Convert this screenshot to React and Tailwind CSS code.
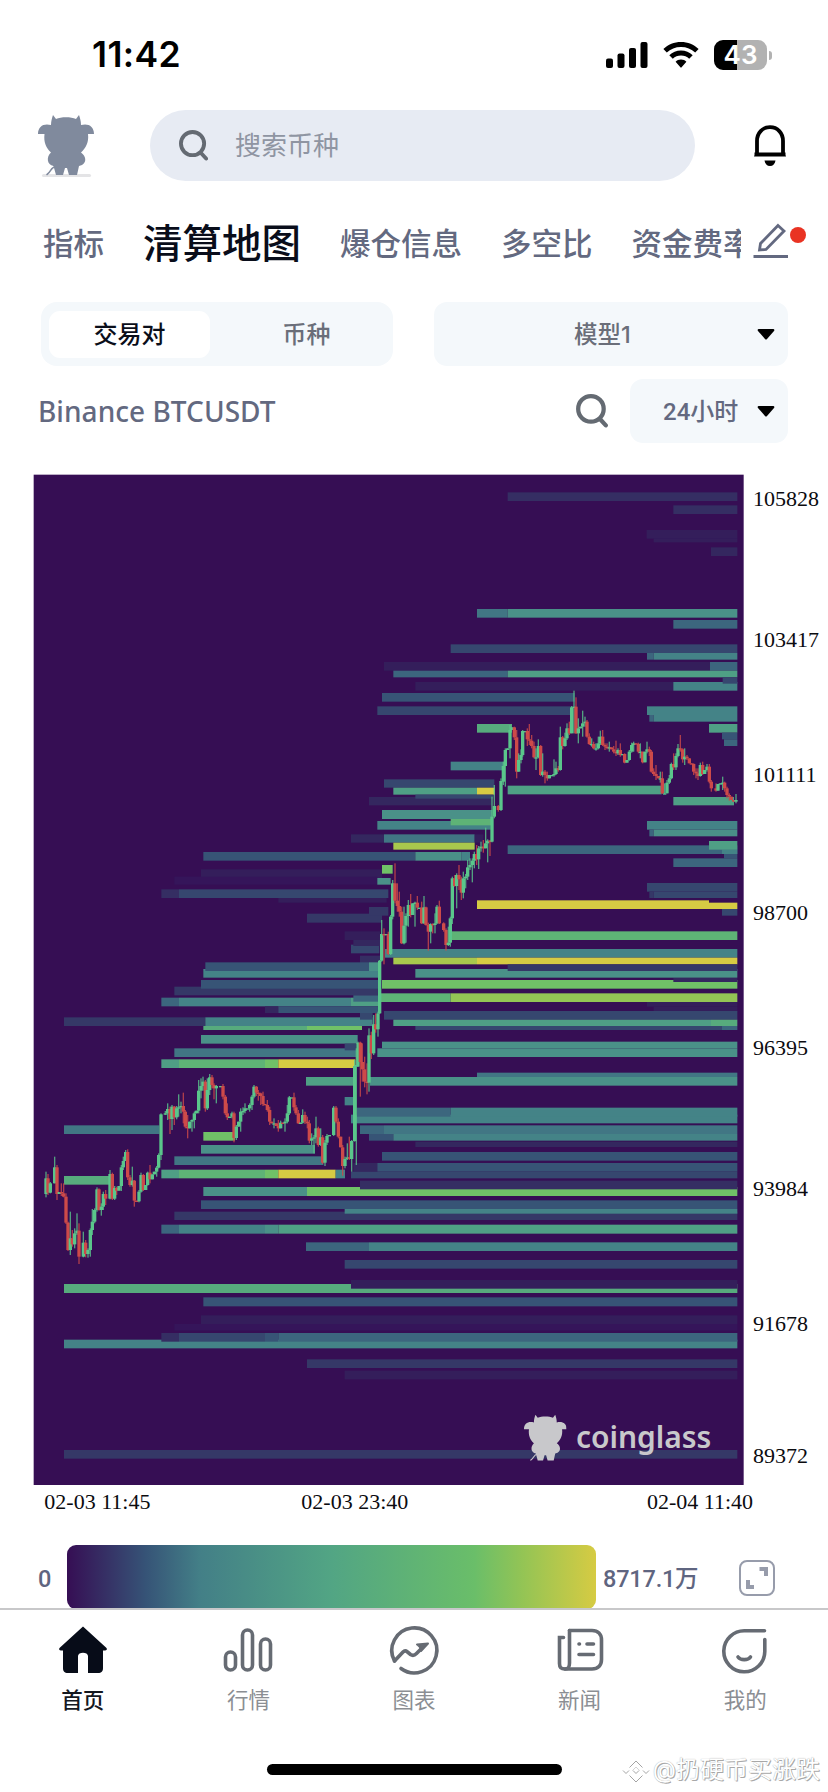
const CJK = "font-['Inter','Noto_Sans_CJK_SC',sans-serif]";

const palette = {
    a: '#35155a',
    b: '#341e5b',
    c: '#34275f',
    d: '#352e63',
    e: '#353867',
    f: '#36476f',
    g: '#375476',
    h: '#3c667e',
    i: '#417684',
    j: '#448387',
    k: '#4a9188',
    l: '#4f9f85',
    m: '#57ab7d',
    n: '#5eb376',
    o: '#70c167',
    p: '#93c455',
    q: '#a8c84d',
    r: '#d6cb43',
};

const END = 2212;

// [top, bottom, [start, level, start, level, ..., end]]
const levels = [
    [1477, 1503, [1523, 'd', END]],
    [1516, 1542, [2020, 'd', END]],
    [1590, 1616, [1940, 'b', END]],
    [1615, 1627, [1961, 'b', END]],
    [1642, 1668, [2133, 'c', END]],
    [1827, 1853, [1431, 'i', 1523, 'k', END]],
    [1860, 1886, [2020, 'h', END]],
    [1933, 1959, [1352, 'f', END]],
    [1959, 1979, [1941, 'h', 1961, 'j', END]],
    [1986, 2012, [1152, 'b', 2130, 'h', END]],
    [2012, 2032, [1180, 'h', 1523, 'l', END]],
    [2046, 2072, [1246, 'b', 2020, 'j', END]],
    [2032, 2051, [2168, 'f', END]],
    [2079, 2105, [1146, 'g', 1724]],
    [2119, 2145, [1132, 'f', 1715]],
    [2119, 2145, [1941, 'j', END]],
    [2145, 2165, [1948, 'h', 1961, 'j', END]],
    [2172, 2198, [1431, 'm', 1536]],
    [2172, 2198, [2127, 'l', END]],
    [2198, 2218, [2166, 'g', END]],
    [2218, 2238, [2172, 'h', END]],
    [2285, 2311, [1352, 'j', 1511]],
    [2338, 2363, [1152, 'f', 1483]],
    [2363, 2384, [1180, 'l', 1431, 'r', 1484]],
    [2357, 2383, [1523, 'l', 1985]],
    [2391, 2416, [1107, 'c', 1478]],
    [2384, 2396, [1246, 'f', 1480]],
    [2391, 2416, [2020, 'l', 2202]],
    [2430, 2457, [1146, 'k', 1478]],
    [2463, 2489, [1132, 'j', 1472]],
    [2457, 2476, [1352, 'n', 1475]],
    [2463, 2489, [1941, 'j', END]],
    [2489, 2509, [1948, 'h', 1961, 'k', END]],
    [2503, 2528, [1053, 'c', 1152, 'i', 1424, 'b', 1450]],
    [2528, 2549, [1180, 'q', 1424]],
    [2536, 2562, [1523, 'h', END]],
    [2549, 2562, [2166, 'j', END]],
    [2523, 2549, [2127, 'l', END]],
    [2562, 2575, [2172, 'g', END]],
    [2556, 2582, [610, 'g', 1246, 'k', 1385, 'j', 1410]],
    [2575, 2601, [2020, 'h', END]],
    [2595, 2621, [1146, 'o', 1178]],
    [2608, 2634, [603, 'b', 1146]],
    [2630, 2654, [523, 'a', 1132]],
    [2634, 2654, [1132, 'k', 1172]],
    [2649, 2675, [1941, 'f', END]],
    [2675, 2694, [1948, 'e', 1961, 'f', END]],
    [2668, 2694, [484, 'd', 537, 'f', 1165]],
    [2694, 2708, [835, 'b', 1160]],
    [2701, 2727, [1431, 'r', 2127]],
    [2708, 2727, [2127, 'r', END]],
    [2727, 2747, [2166, 'f', END]],
    [2741, 2768, [921, 'e', 1146]],
    [2721, 2747, [1107, 'e', 1165]],
    [2794, 2820, [1034, 'b', 1140]],
    [2794, 2820, [1350, 'n', END]],
    [2834, 2860, [1053, 'f', 1138]],
    [2820, 2838, [1060, 'c', 1140]],
    [2847, 2873, [1155, 'j', END]],
    [2867, 2893, [1080, 'd', 1140]],
    [2873, 2893, [1180, 'q', 1431, 'r', END]],
    [2907, 2933, [610, 'j', 1135]],
    [2887, 2913, [616, 'g', 1107, 'k', 1138]],
    [2907, 2933, [1246, 'k', END]],
    [2893, 2913, [1523, 'e', END]],
    [2960, 2986, [523, 'e', 1135]],
    [2940, 2966, [603, 'g', 1135]],
    [2940, 2966, [1146, 'o', END]],
    [2934, 2946, [2020, 'c', END]],
    [2980, 3006, [1140, 'n', 1352, 'p', END]],
    [2993, 3019, [484, 'h', 537, 'j', 1053, 'l', 1135]],
    [2986, 3005, [1060, 'h', 1135]],
    [3006, 3020, [1941, 'b', END]],
    [3020, 3037, [1961, 'b', END]],
    [3019, 3039, [795, 'c', 835, 'g', 1135]],
    [3033, 3059, [1152, 'f', END]],
    [3052, 3078, [192, 'e', 616, 'j', 1118]],
    [3039, 3059, [1080, 'f', 1118]],
    [3059, 3078, [1180, 'l', 2133, 'm', END]],
    [3078, 3090, [610, 'm', 921, 'o', 1086]],
    [3078, 3090, [1246, 'f', 2166, 'h', END]],
    [3105, 3131, [603, 'k', 1073]],
    [3125, 3145, [1146, 'k', END]],
    [3145, 3171, [1132, 'k', END]],
    [3145, 3171, [523, 'i', 1068]],
    [3131, 3151, [1034, 'f', 1068]],
    [3178, 3204, [484, 'l', 537, 'n', 795, 'o', 835, 'r', 1066]],
    [3218, 3231, [1431, 'i', END]],
    [3231, 3257, [918, 'l', 1060]],
    [3231, 3257, [1110, 'k', END]],
    [3291, 3316, [1034, 'j', 1062]],
    [3344, 3370, [1053, 'j', END]],
    [3323, 3350, [1070, 'h', 1352, 'j', END]],
    [3376, 3402, [192, 'i', 478]],
    [3376, 3402, [1080, 'h', 1152, 'i', END]],
    [3402, 3422, [1107, 'g', 1180, 'j', END]],
    [3396, 3422, [610, 'o', 705]],
    [3425, 3441, [1246, 'c', END]],
    [3435, 3461, [603, 'k', 945]],
    [3469, 3495, [523, 'i', 970]],
    [3456, 3482, [1146, 'g', END]],
    [3489, 3515, [1060, 'c', 1132, 'g', END]],
    [3515, 3535, [1053, 'f', END]],
    [3509, 3535, [484, 'l', 537, 'n', 795, 'o', 835, 'r', 1007, 'j', 1035]],
    [3528, 3554, [192, 'm', 327]],
    [3561, 3588, [610, 'k', 921, 'o', END]],
    [3542, 3568, [1080, 'd', END]],
    [3601, 3627, [603, 'g', END]],
    [3635, 3660, [523, 'e', END]],
    [3627, 3641, [1034, 'j', END]],
    [3674, 3701, [484, 'h', 537, 'j', 795, 'k', 835, 'l', END]],
    [3727, 3753, [918, 'h', 1107, 'j', END]],
    [3780, 3806, [1034, 'f', END]],
    [3852, 3879, [192, 'm', END]],
    [3840, 3866, [1053, 'b', END]],
    [3892, 3919, [610, 'g', END]],
    [3946, 3972, [603, 'b', END]],
    [3972, 3992, [523, 'a', END]],
    [4019, 4045, [192, 'j', END]],
    [3999, 4025, [484, 'd', 537, 'f', 795, 'g', 835, 'h', END]],
    [4078, 4104, [921, 'e', END]],
    [4112, 4138, [1034, 'b', END]],
    [4350, 4376, [192, 'e', END]],
];

// candles: [x, close, high, low], every candle opens at the previous close
const runs = [
    {
        x: 60,
        y: 3180,
        open: 402,
        candles: [
            [78, 355, 335, 412], [84, 398, 342, 405], [91, 370, 366, 400], [104, 322, 290, 370], [111, 402, 315, 420],
            [118, 396], [124, 400, 370, 408], [131, 410, 370, 412], [138, 488, 400, 492], [144, 570, 485, 573],
            [151, 535, 455, 585], [157, 553, 510, 560], [164, 520, 505, 565], [171, 512, 460, 525], [177, 590, 490, 612],
            [190, 548, 515, 592], [197, 582, 540, 592], [204, 570, 565, 593], [211, 510, 505, 590], [217, 485, 447, 525],
            [224, 450, 445, 490], [231, 388, 382, 455], [237, 450, 385, 452], [244, 440, 430, 467], [250, 402, 395, 450],
            [257, 416, 390, 435], [270, 342, 330, 418], [277, 416, 338, 420], [284, 384, 378, 420], [290, 392, 380, 405],
            [297, 378], [304, 322, 315, 393], [310, 303, 290, 330], [317, 276, 270, 303], [323, 352, 268, 360],
            [330, 375, 345, 380], [337, 362, 320, 380], [343, 422, 360, 440], [350, 424], [357, 395, 390, 427],
            [363, 345, 338, 398], [370, 390, 342, 393], [377, 375], [383, 338, 335, 377], [390, 358, 315, 370],
            [397, 343], [403, 335], [410, 323, 318, 350], [416, 285, 280, 325], [423, 163, 160, 300],
            [436, 160, 153, 165], [443, 147, 130, 180], [450, 177, 140, 222], [456, 140, 135, 210], [463, 172, 138, 195],
            [470, 145, 138, 178], [476, 142, 103, 170], [483, 138, 125, 160], [490, 155, 98, 190], [496, 200, 150, 205],
            [503, 205, 165, 235], [509, 185], [516, 180, 178, 215], [523, 160, 155, 205], [529, 152],
            [536, 92, 60, 160], [543, 78, 55, 115], [549, 65, 50, 92], [556, 145, 60, 155], [562, 90, 55, 150],
            [569, 52, 42, 105], [576, 75, 45, 85], [582, 85, 70, 118], [589, 78, 75, 130], [602, 78],
            [609, 110, 72, 118], [616, 160, 105, 165], [622, 172, 130, 180], [629, 170], [636, 160, 155, 175],
            [642, 234, 155, 247], [649, 200, 195, 240], [656, 185], [662, 155, 145, 215], [669, 153, 142, 165],
            [675, 145, 130, 160], [682, 145], [689, 135, 130, 155], [696, 110, 105, 150], [702, 80, 75, 115],
            [709, 98, 78, 108], [715, 100, 90, 122], [722, 108, 98, 135], [729, 132, 95, 138], [735, 135],
            [742, 150, 120, 155], [749, 185, 140, 195], [755, 190], [762, 190, 175, 205], [769, 198],
            [775, 205, 180, 215], [782, 188, 182, 205], [788, 190], [795, 185, 175, 215], [802, 160, 135, 190],
            [808, 112, 108, 165], [815, 112], [822, 142, 98, 152], [828, 160, 135, 165], [835, 190, 150, 192],
            [842, 188], [848, 165, 148, 190], [855, 185, 155, 192], [862, 190, 170, 205], [868, 242, 180, 250],
            [875, 235, 220, 255], [882, 232, 225, 280], [888, 205, 170, 250], [895, 255, 200, 260], [902, 232, 205, 258],
            [908, 308, 225, 312], [915, 248, 240, 318], [921, 228, 222, 255], [928, 225], [941, 143, 138, 228],
            [948, 185, 138, 190], [955, 230, 175, 235], [962, 262], [968, 318, 255, 347], [975, 297, 290, 325],
            [982, 292, 250, 300], [988, 297, 230, 300], [995, 243, 240, 335], [1004, 18, 0, 245], [1009, 15, -35, 315],
        ],
    },
    {
        x: 1020,
        y: 2340,
        open: 860,
        candles: [
            [54, 788, 785, 860], [61, 846, 785, 950], [67, 868, 790, 905], [74, 905, 830, 922], [81, 908, 850, 943],
            [87, 766, 745, 935], [94, 820, 755, 837], [101, 733, 705, 825], [107, 748, 700, 758], [114, 700, 695, 770],
            [119, 542, 540, 702], [125, 462, 420, 545], [132, 465, 445, 553], [139, 462], [145, 522, 455, 525],
            [152, 410, 405, 525], [158, 310, 300, 418], [165, 362, 250, 370], [172, 378, 310, 395], [178, 395, 335, 410],
            [185, 490, 380, 492], [192, 437, 380, 493], [198, 408, 400, 488], [205, 375, 360, 440], [212, 405, 342, 412],
            [218, 370], [225, 368, 365, 440], [232, 383, 348, 390], [238, 383], [245, 430, 365, 432],
            [252, 382, 348, 432], [258, 435, 380, 437], [265, 455, 428, 512], [272, 432, 430, 490], [278, 435, 430, 460],
            [285, 430, 400, 460], [291, 380, 375, 432], [298, 430, 362, 432], [311, 450, 427, 455], [318, 495, 445, 512],
            [325, 488, 440, 498], [331, 415, 410, 500], [337, 295, 290, 432], [344, 318, 285, 320], [350, 285, 280, 385],
            [357, 298, 255, 330], [364, 338, 290, 360], [370, 295, 275, 355], [377, 290, 282, 325], [383, 262, 240, 300],
            [390, 255, 235, 270], [397, 242, 235, 307], [403, 222, 215, 265], [410, 238, 195, 255], [416, 205, 198, 267],
            [423, 200, 185, 215], [430, 205, 180, 218], [437, 190, 143, 205], [443, 182, 178, 247], [450, 185, 180, 228],
            [456, 110, 50, 187], [463, 78, 15, 115], [475, 90, 75, 95], [483, 3, -5, 93],
        ],
    },
    {
        x: 1020,
        y: 1410,
        open: 935,
        candles: [
            [490, 888, 875, 945], [496, 840, 835, 950], [503, 835], [510, 780, 765, 865], [516, 772],
            [523, 802, 770, 810], [530, 905, 780, 925], [536, 870, 850, 905], [543, 855, 838, 880], [548, 783, 780, 860],
            [555, 783], [562, 808, 775, 828], [568, 812, 762, 825], [575, 828, 795, 835], [582, 862, 815, 865],
            [588, 862, 835, 900], [595, 828, 808, 865], [602, 915, 825, 918], [608, 905, 850, 920], [615, 915, 900, 940],
            [622, 925, 905, 932], [628, 915], [635, 915], [642, 912, 868, 920], [648, 895, 875, 915],
            [655, 900, 888, 905], [661, 802, 770, 902], [668, 828, 798, 838], [675, 805, 788, 830], [681, 775, 760, 810],
            [688, 790, 755, 795], [695, 712, 708, 790], [702, 710, 662, 790], [708, 790, 682, 792], [715, 775, 745, 820],
            [722, 770], [728, 760, 722, 800], [735, 755, 740, 770], [741, 800, 750, 803], [748, 822, 790, 825],
            [755, 822, 805, 830], [761, 835, 815, 838], [768, 835, 820, 842], [775, 820, 800, 838], [781, 800, 782, 825],
            [788, 825, 780, 828], [795, 830, 820, 840], [801, 832, 820, 838], [808, 832, 815, 845], [814, 838],
            [821, 845, 828, 850], [828, 850, 812, 858], [834, 840, 835, 855], [841, 855, 820, 860], [848, 852],
            [854, 878, 850, 880], [861, 870], [868, 845, 840, 872], [875, 825, 818, 848], [881, 820, 815, 845],
            [888, 822], [895, 845, 818, 850], [901, 845, 820, 865], [908, 877, 845, 880], [915, 845],
            [921, 838, 815, 850], [928, 845, 830, 858], [934, 905, 840, 908], [941, 912, 895, 918], [948, 918, 885, 930],
            [955, 925], [961, 925, 905, 938], [967, 970, 905, 972], [974, 970, 940, 972], [981, 938, 930, 970],
            [988, 925, 915, 942], [994, 882, 878, 928], [1001, 892, 850, 900], [1008, 858, 850, 900], [1014, 835, 822, 862],
            [1021, 838, 795, 845], [1028, 868, 835, 878], [1034, 860, 835, 885], [1041, 865, 855, 870], [1048, 880],
            [1054, 882], [1061, 905, 880, 915], [1068, 910, 895, 925], [1074, 918, 895, 930], [1081, 885, 878, 920],
            [1088, 912, 875, 915], [1094, 900], [1101, 890, 882, 905], [1108, 935, 882, 940], [1114, 955, 930, 965],
            [1128, 962, 940, 965], [1134, 942], [1141, 940], [1148, 938, 920, 960], [1154, 955, 935, 965],
            [1161, 975, 950, 985], [1168, 980, 970, 992], [1174, 990], [1181, 995], [1188, 990, 972, 1000],
        ],
    },
];

const prices = [
    ['105828', 1496],
    ['103417', 1920],
    ['101111', 2324],
    ['98700', 2740],
    ['96395', 3144],
    ['93984', 3567],
    ['91678', 3971],
    ['89372', 4369],
];

const dates = [
    ['02-03 11:45', 133],
    ['02-03 23:40', 904],
    ['02-04 11:40', 1941],
];

function Bull({ className }) {
    return (
        <svg viewBox="0 0 56 61" className={className} fill="currentColor">
            <path d="M13 10C13 6 14 3 15 0L18 4C23 1.5 33 1.5 38 4L41 0C42 3 43 6 43 10C50 8 56 11 56 19H50C51 27 48 33 43 37.5C48 41 49 47 44 50L41 51L39 60H31L29 53H27L25 60H18L15.500 51C9 50 8 42 13 37.500C8 33 5.500 27 6.500 19H0C0 11 6 8 13 10Z" />
            <path d="M17 52C13 52 13 57 9 59.500" fill="none" stroke="currentColor" strokeWidth="1.500" strokeLinecap="round" />
        </svg>
    );
}

function SearchIcon({ className }) {
    return (
        <svg viewBox="0 0 30 32" className={className} fill="none" stroke="#646a72" strokeWidth="4" strokeLinecap="round">
            <circle cx="14" cy="14" r="12" />
            <path d="M22.500 23.500L28 29.500" />
        </svg>
    );
}

function Caret() {
    return (
        <svg viewBox="0 0 18 11" className="w-[18px] h-[11px]">
            <path d="M1.500 0H16.500Q18 0.500 17 2L10 10Q9 11 8 10L1 2Q0 0.500 1.500 0Z" />
        </svg>
    );
}

function StatusBar() {
    return (
        <div className="flex justify-between items-center h-[110px] pl-[92px] pr-[56px]">
            <span className="text-[35.5px] leading-none font-semibold tracking-[0.4px] text-black">11:42</span>
            <div className="flex items-center">
                <svg viewBox="0 0 42 26" className="w-[42px] h-[26px]">
                    <rect x="0" y="16.500" width="7" height="9.500" rx="2" />
                    <rect x="11.500" y="11.500" width="7" height="14.500" rx="2" />
                    <rect x="23" y="6" width="7" height="20" rx="2" />
                    <rect x="34.500" y="0" width="7" height="26" rx="2" />
                </svg>
                <svg viewBox="0 0 36 26" className="ml-[15px] w-9 h-[26px]">
                    <path d="M18 0C24.800 0 31 2.600 35.600 7L32.200 10.600C28.500 7 23.500 5 18 5S7.500 7 3.800 10.600L0.400 7C5 2.600 11.200 0 18 0Z" />
                    <path d="M18 8.600C22.500 8.600 26.600 10.300 29.700 13.200L26.200 16.800C24 14.800 21.200 13.600 18 13.600S12 14.800 9.800 16.800L6.300 13.200C9.400 10.300 13.500 8.600 18 8.600Z" />
                    <path d="M18 17.500C20.300 17.500 22 18.200 23.400 19.800L18.600 25.300Q18 26 17.400 25.300L12.600 19.800C14 18.200 15.700 17.500 18 17.500Z" />
                </svg>
                <div className="ml-[15px] flex items-center justify-center w-[53px] h-[30px] rounded-[9px] bg-[linear-gradient(90deg,#000_43%,#b2b2b2_43%)] text-white text-[26px] leading-none font-semibold">
                    43
                </div>
                <div className="ml-[2px] w-[3px] h-[9px] rounded-r-full bg-[#b2b2b2]" />
            </div>
        </div>
    );
}

function SearchHeader() {
    return (
        <div className="flex items-center h-[71px] pl-[38px]">
            <div className="w-[57px] shrink-0">
                <Bull className="w-14 h-[61px] text-[#808a9d]" />
                <div className="-mt-[2px] mx-1 h-[3px] rounded-full bg-[#e4e4e6]" />
            </div>
            <div className="ml-[55px] flex items-center w-[545px] h-[71px] rounded-full bg-[#e7ebf3] pl-[29px]">
                <SearchIcon className="w-[29px] h-[31px]" />
                <span className="ml-[27px] text-[26px] leading-none text-[#8f95a2]">搜索币种</span>
            </div>
            <svg viewBox="0 0 34 42" className="ml-[58px] w-[34px] h-[42px]">
                <path d="M4 30V16C4 8 9.500 2.200 17 2.200S30 8 30 16V30" fill="none" stroke="#000" strokeWidth="3.800" />
                <path d="M1.500 27.500H32.500V30L33 31.500H1L1.500 30Z" />
                <path d="M11.500 35.500H22.500C22 39 20 41 17 41S12 39 11.500 35.500Z" />
            </svg>
        </div>
    );
}

function Tabs() {
    return (
        <div className="flex items-center h-[121px] pl-[43px] text-[30.5px] font-medium text-[#636980]">
            <div className="flex items-center gap-[39px] w-[698px] overflow-hidden whitespace-nowrap pt-1">
                <span>指标</span>
                <span className="text-[39.5px] text-[#090d1a] leading-[56px]">清算地图</span>
                <span>爆仓信息</span>
                <span>多空比</span>
                <span>资金费率</span>
            </div>
            <svg viewBox="0 0 36 36" className="ml-3 -mt-[2px] w-9 h-9 shrink-0" fill="none" stroke="#636980" strokeWidth="2.800">
                <path d="M25 2.500L31 8L13 26.500L6.500 27L7.500 20.500Z" />
                <path d="M0.500 33.500H35" />
            </svg>
            <span className="ml-[1px] -mt-[13px] size-4 rounded-full bg-[#e93323] shrink-0" />
        </div>
    );
}

function Filters() {
    return (
        <div className="flex flex-col gap-[13px] pl-[41px] pr-10 text-[24px] leading-none font-medium text-[#6a6e79]">
            <div className="flex justify-between h-[64px]">
                <div className="flex items-center w-[352px] rounded-[16px] bg-[#f4f8fb] px-[8px]">
                    <div className="flex items-center justify-center w-[161px] h-[47px] rounded-[11px] bg-white pt-[2px] text-[#0a0e1a]">交易对</div>
                    <div className="flex-1 pl-[18px] pt-[2px] text-center">币种</div>
                </div>
                <div className="flex items-center w-[354px] rounded-[13px] bg-[#f4f8fb] pr-[13px]">
                    <div className="flex-1 pl-[14px] pt-[2px] text-center text-[23.5px]">模型1</div>
                    <Caret />
                </div>
            </div>
            <div className="flex items-center h-[64px]">
                <span className="flex-1 -ml-[3px] text-[28px] tracking-[0.05px] text-[#636980] font-['Noto_Sans',sans-serif]">Binance BTCUSDT</span>
                <SearchIcon className="w-[32px] h-[34px]" />
                <div className="ml-[22px] flex items-center justify-between w-[158px] h-[64px] rounded-[13px] bg-[#f4f8fb] pl-[33px] pr-[13px] text-[#636980]">
                    <span className="pt-[2px] text-[24px] font-['Roboto','Noto_Sans_CJK_SC',sans-serif]">24小时</span>
                    <Caret />
                </div>
            </div>
        </div>
    );
}

function LevelBar({ top, bottom, stops }) {
    const parts = [];
    for (let i = 0; i + 2 < stops.length; i += 2) {
        parts.push(
            <rect key={i} x={stops[i]} y={top} width={stops[i + 2] - stops[i]} height={bottom - top} fill={palette[stops[i + 1]]} />
        );
    }
    return <g>{parts}</g>;
}

function Candles({ run }) {
    return (
        <g transform={`translate(${run.x} ${run.y})`}>
            {run.candles.map(([x, close, high, low], index) => {
                const open = index === 0 ? run.open : run.candles[index - 1][1];
                const top = Math.min(open, close);
                const bottom = Math.max(open, close);
                const color = close <= open ? '#5ac68b' : '#cd4a49';
                return (
                    <g key={x} fill={color}>
                        <rect x={x - 2} y={high ?? top} width="4" height={(low ?? bottom) - (high ?? top)} opacity="0.8" />
                        <rect x={x - 5} y={top} width="10" height={Math.max(bottom - top, 4)} />
                    </g>
                );
            })}
        </g>
    );
}

function HeatMap() {
    return (
        <svg viewBox="0 1422 2484 3120" className="w-[828px] h-[1040px] mt-[31px] shrink-0">
            <rect x="101" y="1424" width="2130" height="3031" fill="#360e54" />
            <g>
                {levels.map(([top, bottom, stops], index) => (
                    <LevelBar key={index} top={top} bottom={bottom} stops={stops} />
                ))}
            </g>
            {runs.map((run) => (
                <Candles key={run.y} run={run} />
            ))}
            <g transform="translate(1572 4243)" color="#c8c8cb">
                <svg width="128" height="142">
                    <Bull />
                </svg>
            </g>
            <text x="1728" y="4343" fill="#c8c8cb" fontSize="94" fontWeight="600" textLength="406" className="font-['Noto_Sans',sans-serif]" lengthAdjust="spacingAndGlyphs">
                coinglass
            </text>
            <g fill="#0b0b0f" fontSize="66" className="font-['Liberation_Serif',serif]">
                {prices.map(([label, y]) => (
                    <text key={label} x="2259" y={y + 21}>{label}</text>
                ))}
                {dates.map(([label, x]) => (
                    <text key={label} x={x} y="4527">{label}</text>
                ))}
            </g>
        </svg>
    );
}

function Legend() {
    return (
        <div className="flex h-[94px] pt-[31px] pl-[38px] text-[23.5px] font-medium leading-[68px] text-[#5f6580] overflow-hidden">
            <span className="w-[29px] font-['Roboto',sans-serif]">0</span>
            <div className="w-[529px] h-[64px] rounded-[9px] bg-[linear-gradient(90deg,#360e54_0%,#365477_15%,#437f87_25%,#52a584_50%,#6abe69_77%,#93c455_86%,#d6cb43_100%)]" />
            <span className="ml-[7px] w-[136px] tracking-[-0.2px] font-['Roboto','Noto_Sans_CJK_SC',sans-serif]">8717.1万</span>
            <svg viewBox="0 0 36 36" className="mt-[15px] w-9 h-9" fill="none" stroke="#979cab" strokeWidth="2">
                <rect x="1" y="1" width="34" height="34" rx="7" />
                <path d="M20.500 9H27V16M15 27H9V20" strokeWidth="4" />
            </svg>
        </div>
    );
}

const navItems = [
    {
        label: '首页',
        active: true,
        icon: (
            <path
                d="M24 0.500L47.500 22C48.500 23.500 47.500 24.500 46 24.500H44V42C44 45.500 42.500 47 39 47H29V30C29 25.500 19 25.500 19 30V47H9C5.500 47 4 45.500 4 42V24.500H2C0.500 24.500 -0.500 23.500 0.500 22Z"
                fill="#070c18"
                stroke="none"
            />
        ),
    },
    {
        label: '行情',
        icon: (
            <>
                <rect x="1.500" y="26" width="10" height="18" rx="5" />
                <rect x="18.500" y="4" width="10" height="40" rx="5" />
                <rect x="36.500" y="13" width="10" height="31" rx="5" />
            </>
        ),
    },
    {
        label: '图表',
        icon: (
            <>
                <path d="M4.500 35A22.500 22.500 0 1 1 11 42.500" />
                <path d="M4.500 35L13 26Q15 24 17.500 26L20.500 28.500Q23.500 30.500 26.500 27.500L32 22" />
                <path d="M27 18.500L38 17.500L31 25Q31 21 27 18.500Z" fill="#666b73" strokeWidth="2" strokeLinejoin="round" />
            </>
        ),
    },
    {
        label: '新闻',
        icon: (
            <>
                <path d="M13.500 4.500H36C42 4.500 45.500 8 45.500 14V33.500C45.500 39.500 42 43 36 43H9C5 43 3.500 41.500 3.500 37.500V11.500H7.500" />
                <path d="M13.500 4.500V37C13.500 41 12.500 43 9 43" />
                <path d="M23 18H23.500M31 18H37.500M23 28.500H37.500" />
            </>
        ),
    },
    {
        label: '我的',
        icon: (
            <>
                <path d="M43.500 4.800H24A20.500 20.500 0 1 0 43.800 25.500V13.500" />
                <path d="M17 31C19.500 34.500 27 34.500 29.500 31" />
            </>
        ),
    },
];

function BottomNav() {
    return (
        <div className="relative h-[184px] border-t-2 border-[#c8c8ca] bg-white">
            <div className="flex pt-4">
                {navItems.map((item) => (
                    <div key={item.label} className="flex flex-1 flex-col items-center">
                        <svg viewBox="0 0 48 48" className="size-12 overflow-visible" fill="none" stroke="#666b73" strokeWidth="3.600" strokeLinecap="round">
                            {item.icon}
                        </svg>
                        <span className={item.active ? 'mt-[10px] text-[21.5px] font-medium text-[#15181f]' : 'mt-[10px] text-[21.5px] text-[#8b8e93]'}>
                            {item.label}
                        </span>
                    </div>
                ))}
            </div>
            <div className="absolute left-[267px] top-[154px] w-[295px] h-[11px] rounded-full bg-black" />
            <div className="absolute right-[8px] top-[142px] flex items-center gap-[3px] text-[24px] text-white whitespace-nowrap [text-shadow:0_0_1px_#999,1px_1px_0_#aaa]">
                <svg viewBox="0 0 28 23" className="mt-[3px] w-[28px] h-[23px]" fill="none" stroke="#9a9a9a" strokeWidth="0.900">
                    <path d="M7.500 7.500L14 1L20.500 7.500M7.500 15.500L14 22L20.500 15.500" />
                    <path d="M1 10.500L4 13.500L7 10.500M21 10.500L24 13.500L27 10.500M11 10.500L14 13.500L17 10.500" />
                    <path d="M10.500 10.500L14 7L17.500 10.500" stroke="#cfcfcf" />
                </svg>
                <span>@扔硬币买涨跌</span>
            </div>
        </div>
    );
}

export default function App() {
    return (
        <div className={`flex flex-col w-[828px] h-[1792px] overflow-hidden bg-white ${CJK}`}>
            <StatusBar />
            <SearchHeader />
            <Tabs />
            <Filters />
            <HeatMap />
            <Legend />
            <BottomNav />
        </div>
    );
}
